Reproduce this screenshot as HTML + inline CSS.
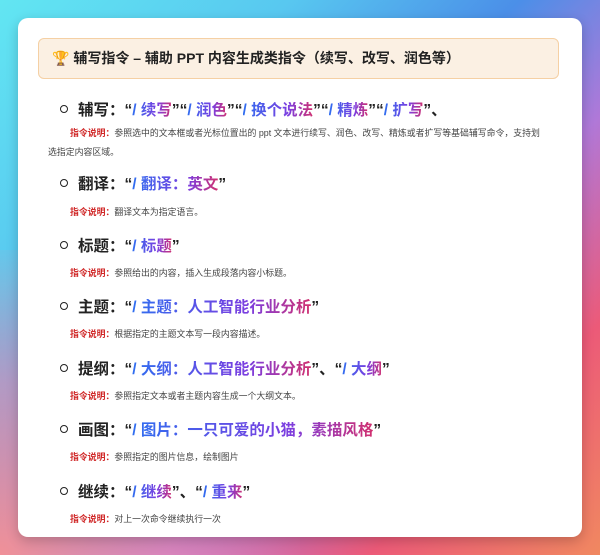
<!DOCTYPE html>
<html><head><meta charset="utf-8"><style>
*{margin:0;padding:0;box-sizing:border-box}
body{width:600px;height:555px;overflow:hidden;font-family:"Liberation Sans","Noto Sans CJK SC",sans-serif;
background:linear-gradient(135deg,#62e6f2 0%,#58c8f0 25%,#4b8fe8 45%,#b078d8 62%,#ec5a78 80%,#f08860 100%);position:relative}
.bl{position:absolute;left:0;top:250px;width:300px;height:305px;background:radial-gradient(ellipse at 0% 100%,#f09098 0%,rgba(240,140,170,.6) 40%,rgba(240,140,170,0) 75%)}
.card{position:absolute;left:18px;top:18px;width:564px;height:519px;background:#fff;border-radius:10px;box-shadow:0 4px 12px rgba(0,0,0,.2)}
.hd{position:absolute;left:20px;top:20px;width:521px;height:41px;background:#fbf0e3;border:1px solid #f5d0a4;border-radius:6px;font-size:14px;font-weight:600;color:#222;line-height:39px;padding-left:13px}
.it{position:absolute;left:42px;font-size:15.5px;font-weight:600;color:#222;white-space:nowrap}
.it::before{content:"";position:absolute;left:0;top:7px;width:6px;height:6px;border:1.5px solid #222;border-radius:50%}
.it b{margin-left:18px;font-weight:600}
.g{background:linear-gradient(90deg,#2f6ef0,#7c3ee0 65%,#d03070);-webkit-background-clip:text;background-clip:text;color:transparent}
.d{position:absolute;left:52px;font-size:8.9px;color:#444;white-space:nowrap}
.d i{font-style:normal;color:#d02828;font-weight:bold}
</style></head><body><div class="bl"></div>
<div class="card">
<div class="hd">🏆 辅写指令 – 辅助 PPT 内容生成类指令（续写、改写、润色等）</div>
<div class="it" style="top:80px"><b>辅写：“<span class="g">/ 续写</span>”“<span class="g">/ 润色</span>”“<span class="g">/ 换个说法</span>”“<span class="g">/ 精炼</span>”“<span class="g">/ 扩写</span>”、</b></div>
<div class="d" style="top:108px;left:52px"><i>指令说明：</i>参照选中的文本框或者光标位置出的 ppt 文本进行续写、润色、改写、精炼或者扩写等基础辅写命令，支持划</div>
<div class="d" style="top:127px;left:30px">选指定内容区域。</div>
<div class="it" style="top:154px"><b>翻译：“<span class="g">/ 翻译：英文</span>”</b></div>
<div class="d" style="top:187px"><i>指令说明：</i>翻译文本为指定语言。</div>
<div class="it" style="top:216px"><b>标题：“<span class="g">/ 标题</span>”</b></div>
<div class="d" style="top:248px"><i>指令说明：</i>参照给出的内容，插入生成段落内容小标题。</div>
<div class="it" style="top:277px"><b>主题：“<span class="g">/ 主题：人工智能行业分析</span>”</b></div>
<div class="d" style="top:309px"><i>指令说明：</i>根据指定的主题文本写一段内容描述。</div>
<div class="it" style="top:339px"><b>提纲：“<span class="g">/ 大纲：人工智能行业分析</span>”、“<span class="g">/ 大纲</span>”</b></div>
<div class="d" style="top:371px"><i>指令说明：</i>参照指定文本或者主题内容生成一个大纲文本。</div>
<div class="it" style="top:400px"><b>画图：“<span class="g">/ 图片：一只可爱的小猫，素描风格</span>”</b></div>
<div class="d" style="top:432px"><i>指令说明：</i>参照指定的图片信息，绘制图片</div>
<div class="it" style="top:462px"><b>继续：“<span class="g">/ 继续</span>”、“<span class="g">/ 重来</span>”</b></div>
<div class="d" style="top:494px"><i>指令说明：</i>对上一次命令继续执行一次</div>
</div>
</body></html>
